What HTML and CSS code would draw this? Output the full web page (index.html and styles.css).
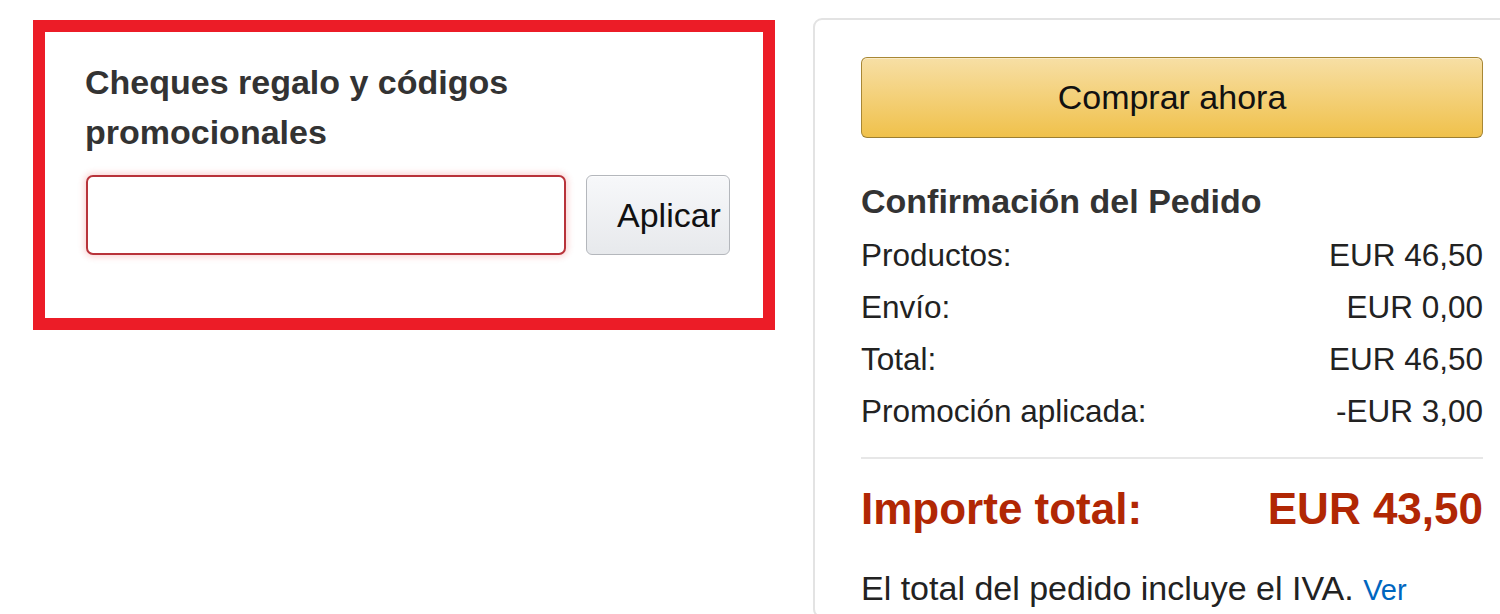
FILE: index.html
```html
<!DOCTYPE html>
<html lang="es">
<head>
  <meta charset="UTF-8">
  <title>Confirmación del Pedido</title>
  <link rel="stylesheet" href="styles.css">
</head>
<body>
  <div class="page">
    <div class="promo-box">
      <h3 class="promo-title">Cheques regalo y códigos promocionales</h3>
      <div class="promo-form">
        <input type="text" class="promo-input" />
        <button class="btn-apply">Aplicar</button>
      </div>
    </div>

    <div class="summary">
      <button class="btn-buy">Comprar ahora</button>

      <h3 class="summary-title">Confirmación del Pedido</h3>
      <div class="summary-row"><span>Productos:</span><span>EUR 46,50</span></div>
      <div class="summary-row"><span>Envío:</span><span>EUR 0,00</span></div>
      <div class="summary-row"><span>Total:</span><span>EUR 46,50</span></div>
      <div class="summary-row"><span>Promoción aplicada:</span><span>-EUR 3,00</span></div>

      <hr class="divider">

      <div class="grand-total"><span>Importe total:</span><span>EUR 43,50</span></div>

      <p class="vat-note">El total del pedido incluye el IVA. <a href="#">Ver</a></p>
    </div>
  </div>
</body>
</html>
```

FILE: styles.css
```css
html, body {
  margin: 0;
  height: 100%;
  overflow: hidden;
  background-color: #fff;
}
body {
  font-family: "Liberation Sans", Arial, sans-serif;
  color: #111;
}
.page {
  display: flex;
  align-items: flex-start;
  gap: 38px;
  padding: 18px 0 0 33px;
}

/* caja de códigos promocionales */
.promo-box {
  box-sizing: border-box;
  flex: none;
  width: 742px;
  height: 310px;
  margin-top: 2px;
  border: 12px solid #ec1c27;
  padding: 25px 0 0 40px;
}
.promo-title {
  margin: 0;
  font-size: 34px;
  line-height: 50px;
  font-weight: bold;
  color: #333;
  width: 460px;
}
.promo-form {
  display: flex;
  gap: 20px;
  margin-top: 18px;
}
.promo-input {
  box-sizing: border-box;
  flex: none;
  width: 480px;
  height: 80px;
  margin: 0 0 0 1px;
  border: 2px solid #b8333a;
  border-radius: 7px;
  box-shadow: 0 0 6px 2px rgba(230, 60, 60, 0.22);
  outline: none;
  background: #fff;
}
.btn-apply {
  box-sizing: border-box;
  flex: none;
  width: 144px;
  height: 80px;
  padding: 0 0 0 30px;
  text-align: left;
  white-space: nowrap;
  overflow: hidden;
  font-family: "Liberation Sans", Arial, sans-serif;
  font-size: 34px;
  color: #111;
  border: 1px solid #b4b7bc;
  border-radius: 6px;
  background: linear-gradient(to bottom, #f7f8fa, #e7e9ec);
  box-shadow: 0 1px 0 rgba(255, 255, 255, 0.6) inset;
}

/* resumen del pedido */
.summary {
  box-sizing: border-box;
  flex: none;
  width: 760px;
  min-height: 600px;
  border: 2px solid #e3e3e3;
  border-radius: 9px;
  padding: 37px 0 0 46px;
}
.summary > * {
  width: 622px;
}
.btn-buy {
  box-sizing: border-box;
  display: block;
  height: 81px;
  font-family: "Liberation Sans", Arial, sans-serif;
  font-size: 34px;
  color: #111;
  border: 1px solid #a88734;
  border-bottom-color: #9c7e31;
  border-radius: 6px;
  background: linear-gradient(to bottom, #f7dfa5, #f0c14b);
  box-shadow: 0 1px 0 rgba(255, 255, 255, 0.4) inset;
}
.summary-title {
  margin: 41px 0 6px;
  font-size: 34px;
  line-height: 44px;
  font-weight: bold;
  color: #333;
}
.summary-row {
  display: flex;
  justify-content: space-between;
  font-size: 31.5px;
  line-height: 52px;
  color: #222;
}
.divider {
  margin: 20px 0 0;
  border: 0;
  border-top: 2px solid #e7e7e7;
}
.grand-total {
  display: flex;
  justify-content: space-between;
  margin-top: 22px;
  font-size: 44px;
  line-height: 56px;
  font-weight: bold;
  color: #b12704;
}
.vat-note {
  margin: 26px 0 0;
  font-size: 34px;
  line-height: 50px;
  color: #222;
}
.vat-note a {
  font-size: 29px;
  color: #0066c0;
  text-decoration: none;
}
```
